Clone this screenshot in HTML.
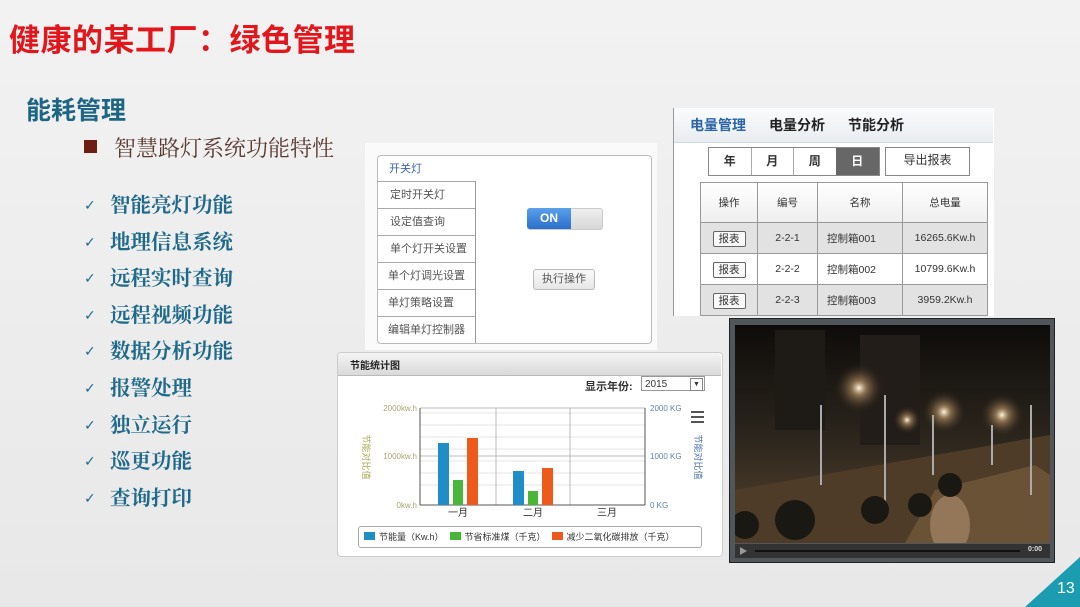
<!DOCTYPE html><html><head><meta charset="utf-8"><style>
body{margin:0;width:1080px;height:607px;overflow:hidden;position:relative;background:linear-gradient(#f2f2f2,#ececec 60%,#e8e8e8);font-family:"Liberation Sans","Noto Sans CJK SC",sans-serif}
.a{position:absolute}
.t{font-size:11px;color:#333}
.serif{font-family:"Liberation Serif","Noto Serif CJK SC",serif}
.ck{font-family:"DejaVu Sans",sans-serif;font-size:14px;font-weight:normal;display:inline-block;width:26px;vertical-align:2px}
td{padding:0}
</style></head><body>
<div class="a" style="left:9px;top:15px;font-size:31px;font-weight:bold;color:#e3161c;letter-spacing:0.5px">健康的某工厂：绿色管理</div>
<div class="a" style="left:26px;top:91px;font-size:25px;font-weight:bold;color:#1c6585">能耗管理</div>
<div class="a" style="left:84px;top:140px;width:13px;height:13px;background:#6e1d12"></div>
<div class="a serif" style="left:114px;top:132px;font-size:22px;color:#5a3a30">智慧路灯系统功能特性</div>
<div class="a serif" style="left:84px;top:188px;font-size:20.5px;line-height:36.6px;color:#1f6a8a;font-weight:bold">
<div><span class="ck">✓</span>智能亮灯功能</div><div><span class="ck">✓</span>地理信息系统</div><div><span class="ck">✓</span>远程实时查询</div><div><span class="ck">✓</span>远程视频功能</div><div><span class="ck">✓</span>数据分析功能</div><div><span class="ck">✓</span>报警处理</div><div><span class="ck">✓</span>独立运行</div><div><span class="ck">✓</span>巡更功能</div><div><span class="ck">✓</span>查询打印</div></div>

<!-- switch panel -->
<div class="a" style="left:365px;top:143px;width:292px;height:207px;background:#fafafa"></div>
<div class="a" style="left:377px;top:155px;width:273px;height:187px;background:#fff;border:1px solid #bbb;border-radius:4px"></div>
<div class="a" style="left:389px;top:160px;font-size:11px;color:#3a5fb5">开关灯</div>
<div class="a" style="left:378px;top:181px;width:97px;height:162px;border-right:1px solid #999">
<div class="t" style="height:26px;border-top:1px solid #aaa;border-bottom:1px solid #aaa;line-height:26px;padding-left:12px;color:#555">定时开关灯</div>
<div class="t" style="height:26px;border-bottom:1px solid #aaa;line-height:26px;padding-left:12px;color:#555">设定值查询</div>
<div class="t" style="height:26px;border-bottom:1px solid #aaa;line-height:26px;padding-left:12px;color:#555">单个灯开关设置</div>
<div class="t" style="height:26px;border-bottom:1px solid #aaa;line-height:26px;padding-left:10px;color:#555">单个灯调光设置</div>
<div class="t" style="height:26px;border-bottom:1px solid #aaa;line-height:26px;padding-left:10px;color:#555">单灯策略设置</div>
<div class="t" style="height:26px;line-height:26px;padding-left:10px;color:#555">编辑单灯控制器</div></div>
<div class="a" style="left:527px;top:208px;width:74px;height:20px;border-radius:3px;background:linear-gradient(#eee,#d8d8d8);border:1px solid #ccc"></div>
<div class="a" style="left:527px;top:208px;width:44px;height:21px;border-radius:3px 0 0 3px;background:linear-gradient(#5aa0ea,#2a6fcc);color:#fff;font-weight:bold;font-size:12px;text-align:center;line-height:21px">ON</div>
<div class="a t" style="left:533px;top:269px;width:60px;height:19px;border:1px solid #bbb;border-radius:3px;background:linear-gradient(#fafafa,#e6e6e6);text-align:center;line-height:19px;color:#555">执行操作</div>

<!-- table panel -->
<div class="a" style="left:673px;top:108px;width:320px;height:208px;background:#fff;border-left:1px solid #999"></div>
<div class="a" style="left:674px;top:108px;width:319px;height:34px;background:linear-gradient(#fafbfc,#e9edf0);border-bottom:1px solid #cdd"></div>
<div class="a" style="left:690px;top:115px;font-size:14px;color:#2b65a8;font-weight:bold">电量管理</div>
<div class="a" style="left:769px;top:115px;font-size:14px;color:#222;font-weight:bold">电量分析</div>
<div class="a" style="left:848px;top:115px;font-size:14px;color:#222;font-weight:bold">节能分析</div>
<div class="a" style="left:708px;top:147px;width:170px;height:27px;border:1px solid #888;display:flex;font-size:12px;font-weight:bold;color:#333">
<div style="width:42px;border-right:1px solid #aaa;text-align:center;line-height:27px">年</div>
<div style="width:42px;border-right:1px solid #aaa;text-align:center;line-height:27px">月</div>
<div style="width:42px;text-align:center;line-height:27px">周</div>
<div style="width:44px;background:#676767;color:#fff;text-align:center;line-height:27px">日</div></div>
<div class="a" style="left:885px;top:147px;width:83px;height:27px;border:1px solid #888;font-size:12px;text-align:center;line-height:25px;color:#333">导出报表</div>
<table class="a" style="left:700px;top:182px;border-collapse:collapse;font-size:10.5px;color:#333;text-align:center;table-layout:fixed;width:288px">
<tr style="height:40px;background:linear-gradient(#fff,#eee)"><td style="width:56px;border:1px solid #999">操作</td><td style="width:59px;border:1px solid #999">编号</td><td style="width:84px;border:1px solid #999">名称</td><td style="width:84px;border:1px solid #999">总电量</td></tr>
<tr style="height:31px;background:#e2e2e2"><td style="border:1px solid #999"><span style="border:1px solid #666;border-radius:2px;padding:1px 5px;background:#fafafa">报表</span></td><td style="border:1px solid #999">2-2-1</td><td style="border:1px solid #999;text-align:left;padding-left:9px">控制箱001</td><td style="border:1px solid #999">16265.6Kw.h</td></tr>
<tr style="height:31px;background:#fff"><td style="border:1px solid #999"><span style="border:1px solid #666;border-radius:2px;padding:1px 5px;background:#fafafa">报表</span></td><td style="border:1px solid #999">2-2-2</td><td style="border:1px solid #999;text-align:left;padding-left:9px">控制箱002</td><td style="border:1px solid #999">10799.6Kw.h</td></tr>
<tr style="height:31px;background:#e2e2e2"><td style="border:1px solid #999"><span style="border:1px solid #666;border-radius:2px;padding:1px 5px;background:#fafafa">报表</span></td><td style="border:1px solid #999">2-2-3</td><td style="border:1px solid #999;text-align:left;padding-left:9px">控制箱003</td><td style="border:1px solid #999">3959.2Kw.h</td></tr>
</table>

<!-- chart panel -->
<div class="a" style="left:337px;top:352px;width:384px;height:203px;background:#fff;border:1px solid #ccc;border-radius:4px"></div>
<div class="a" style="left:338px;top:353px;width:383px;height:22px;background:linear-gradient(#f4f4f4,#d9d9d9);border-bottom:1px solid #bbb;border-radius:4px 4px 0 0"></div>
<div class="a" style="left:350px;top:357px;font-size:10px;font-weight:bold;color:#222">节能统计图</div>
<div class="a" style="left:585px;top:378px;font-size:11px;font-weight:bold;color:#333">显示年份:</div>
<div class="a" style="left:641px;top:376px;height:15px;border:1px solid #999;font-size:10px;line-height:15px;padding-left:3px;color:#333;box-sizing:border-box;width:64px">2015<span style="position:absolute;right:1px;top:1px;width:11px;height:11px;border:1px solid #888;font-size:7px;line-height:11px;text-align:center">▼</span></div>
<svg class="a" style="left:337px;top:395px" width="384" height="125" font-family="Liberation Sans" font-size="8">
<g stroke="#e4e4e4"><line x1="83" y1="18" x2="308" y2="18"/><line x1="83" y1="30" x2="308" y2="30"/><line x1="83" y1="42" x2="308" y2="42"/><line x1="83" y1="54" x2="308" y2="54"/><line x1="83" y1="66" x2="308" y2="66"/><line x1="83" y1="78" x2="308" y2="78"/><line x1="83" y1="90" x2="308" y2="90"/></g>
<g stroke="#bbb"><line x1="83" y1="13" x2="308" y2="13"/><line x1="83" y1="61" x2="308" y2="61"/><line x1="159" y1="13" x2="159" y2="110"/><line x1="233" y1="13" x2="233" y2="110"/></g>
<g stroke="#555"><line x1="83" y1="13" x2="83" y2="110"/><line x1="308" y1="13" x2="308" y2="110"/><line x1="83" y1="110" x2="308" y2="110"/></g>
<rect x="101" y="48" width="11" height="62" fill="#1f8dc8"/><rect x="116" y="85" width="10" height="25" fill="#49b63a"/><rect x="130" y="43" width="11" height="67" fill="#ee5a1c"/>
<rect x="176" y="76" width="11" height="34" fill="#1f8dc8"/><rect x="191" y="96" width="10" height="14" fill="#49b63a"/><rect x="205" y="73" width="11" height="37" fill="#ee5a1c"/>
<g fill="#a8a870" text-anchor="end"><text x="80" y="16">2000kw.h</text><text x="80" y="64">1000kw.h</text><text x="80" y="113">0kw.h</text></g>
<g fill="#6080a8"><text x="313" y="16">2000 KG</text><text x="313" y="64">1000 KG</text><text x="313" y="113">0 KG</text></g>
<g fill="#333" font-size="10" text-anchor="middle"><text x="121" y="121">一月</text><text x="196" y="121">二月</text><text x="270" y="121">三月</text></g>
<g fill="#555"><rect x="354" y="16" width="13" height="2"/><rect x="354" y="21" width="13" height="2"/><rect x="354" y="26" width="13" height="2"/></g>
<text x="26" y="62" fill="#a8a850" font-size="9" transform="rotate(90 26 62)" text-anchor="middle">节能对比值</text>
<text x="358" y="62" fill="#4a70b0" font-size="9" transform="rotate(90 358 62)" text-anchor="middle">节能对比值</text>
</svg>
<div class="a" style="left:358px;top:526px;width:342px;height:20px;border:1px solid #aaa;border-radius:3px;font-size:9px;color:#333;line-height:20px;white-space:nowrap">
<span style="display:inline-block;width:11px;height:8px;background:#1f8dc8;margin:0 4px 0 5px"></span>节能量（Kw.h）<span style="display:inline-block;width:11px;height:8px;background:#49b63a;margin:0 4px 0 6px"></span>节省标准煤（千克）<span style="display:inline-block;width:11px;height:8px;background:#ee5a1c;margin:0 4px 0 6px"></span>减少二氧化碳排放（千克）</div>

<!-- video -->
<div class="a" style="left:729px;top:318px;width:326px;height:245px;background:#50565a;border:1px solid #222;box-sizing:border-box"></div>
<svg class="a" style="left:735px;top:325px" width="315" height="218">
<defs><radialGradient id="l" r="0.5"><stop offset="0" stop-color="#fff8e0"/><stop offset="0.3" stop-color="#c8a070" stop-opacity=".6"/><stop offset="1" stop-color="#302418" stop-opacity="0"/></radialGradient>
<linearGradient id="g" x1="0" y1="0" x2="0" y2="1"><stop offset="0" stop-color="#0e0c0a"/><stop offset=".5" stop-color="#2a241c"/><stop offset="1" stop-color="#5a4630"/></linearGradient></defs>
<rect width="315" height="218" fill="url(#g)"/>
<rect x="40" y="5" width="50" height="100" fill="#1e1a16"/><rect x="125" y="10" width="60" height="110" fill="#221d18"/>
<path d="M0 165 L315 110 L315 218 L0 218Z" fill="#4e3c28"/>
<path d="M170 218 L200 165 L300 140 L315 150 L315 218Z" fill="#6a5236"/>
<ellipse cx="215" cy="200" rx="20" ry="30" fill="#b09070" opacity=".6"/>
<circle cx="124" cy="63" r="25" fill="url(#l)"/><circle cx="209" cy="87" r="22" fill="url(#l)"/><circle cx="267" cy="90" r="22" fill="url(#l)"/><circle cx="172" cy="95" r="14" fill="url(#l)"/>
<g stroke="#aaa" stroke-width="2"><line x1="150" y1="70" x2="150" y2="190"/><line x1="198" y1="90" x2="198" y2="150"/><line x1="257" y1="100" x2="257" y2="140"/><line x1="86" y1="80" x2="86" y2="160"/><line x1="296" y1="80" x2="296" y2="170"/></g>
<g fill="#1a1812"><circle cx="60" cy="195" r="20"/><circle cx="140" cy="185" r="14"/><circle cx="185" cy="180" r="12"/><circle cx="215" cy="160" r="12"/><circle cx="10" cy="200" r="14"/></g>
</svg>
<div class="a" style="left:735px;top:544px;width:315px;height:14px;background:#333"></div>
<div class="a" style="left:740px;top:547px;width:0;height:0;border-left:7px solid #999;border-top:4px solid transparent;border-bottom:4px solid transparent"></div>
<div class="a" style="left:755px;top:550px;width:265px;height:2px;background:#111"></div>
<div class="a" style="left:1028px;top:546px;font-size:7px;color:#ddd;font-weight:bold">0:00</div>

<div class="a" style="left:1025px;top:557px;width:0;height:0;border-left:55px solid transparent;border-bottom:50px solid #1b9cb0"></div>
<div class="a" style="left:1057px;top:580px;font-size:16px;color:#fff">13</div>
</body></html>
